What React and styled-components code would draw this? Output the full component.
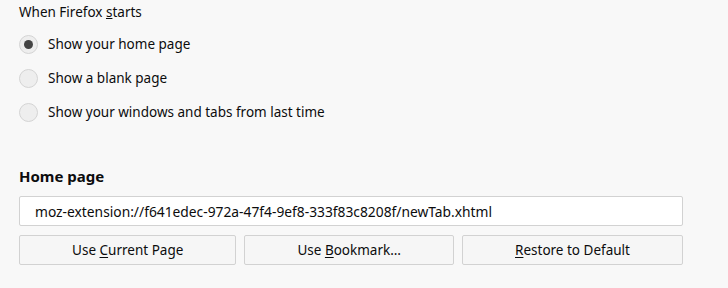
import React, { useState } from 'react';
import styled, { createGlobalStyle } from 'styled-components';

const GlobalStyle = createGlobalStyle`
  html, body {
    margin: 0;
    padding: 0;
    background: #f9f9fa;
  }
  body {
    font-family: "Noto Sans", "DejaVu Sans", sans-serif;
    color: #0c0c0d;
  }
`;

const Page = styled.div`
  width: 728px;
  height: 288px;
  box-sizing: border-box;
  padding: 3px 45px 0 19px;
  background: #f8f8f8;
  overflow: hidden;
`;

const Caption = styled.div`
  font-size: 13.5px;
  line-height: 18px;
  height: 18px;
  margin-bottom: 13px;
`;

const RadioList = styled.div`
  display: flex;
  flex-direction: column;
  gap: 14px;
`;

const RadioRow = styled.label`
  display: flex;
  align-items: center;
  gap: 10px;
  height: 20px;
  font-size: 13.5px;
  cursor: default;
`;

const RadioCircle = styled.span`
  width: 19px;
  height: 19px;
  box-sizing: border-box;
  border-radius: 50%;
  border: 1px solid #d4d4d4;
  background: #eeeeee;
  display: flex;
  align-items: center;
  justify-content: center;

  &::after {
    content: '';
    width: 9px;
    height: 9px;
    border-radius: 50%;
    background: ${p => (p.$checked ? '#444444' : 'transparent')};
  }
`;

const SectionTitle = styled.h2`
  margin: 44px 0 10px;
  font-size: 15px;
  line-height: 20px;
  font-weight: 700;
`;

const UrlInput = styled.input`
  display: block;
  width: 100%;
  height: 30px;
  box-sizing: border-box;
  border: 1px solid #d2d2d2;
  border-radius: 2px;
  background: #ffffff;
  padding: 0 15px;
  font-family: inherit;
  font-size: 13.8px;
  color: #0c0c0d;
  outline: none;
`;

const ButtonRow = styled.div`
  display: flex;
  gap: 8px;
  margin-top: 9px;
`;

const Button = styled.button`
  flex: 1 1 auto;
  height: 30px;
  box-sizing: border-box;
  border: 1px solid #d2d2d2;
  border-radius: 2px;
  background: #f6f6f6;
  font-family: inherit;
  font-size: 13.5px;
  color: #0c0c0d;
  padding: 0 8px;

  u {
    text-decoration: underline;
    text-underline-offset: 2px;
  }
`;

const options = [
  'Show your home page',
  'Show a blank page',
  'Show your windows and tabs from last time',
];

export default function App() {
  const [choice, setChoice] = useState(0);

  return (
    <>
      <GlobalStyle />
      <Page>
        <Caption>
          When Firefox <u>s</u>tarts
        </Caption>
        <RadioList>
          {options.map((label, i) => (
            <RadioRow key={label} onClick={() => setChoice(i)}>
              <RadioCircle $checked={choice === i} />
              {label}
            </RadioRow>
          ))}
        </RadioList>

        <SectionTitle>Home page</SectionTitle>
        <UrlInput
          defaultValue="moz-extension://f641edec-972a-47f4-9ef8-333f83c8208f/newTab.xhtml"
        />
        <ButtonRow>
          <Button>
            Use <u>C</u>urrent Page
          </Button>
          <Button>
            Use <u>B</u>ookmark…
          </Button>
          <Button>
            <u>R</u>estore to Default
          </Button>
        </ButtonRow>
      </Page>
    </>
  );
}
